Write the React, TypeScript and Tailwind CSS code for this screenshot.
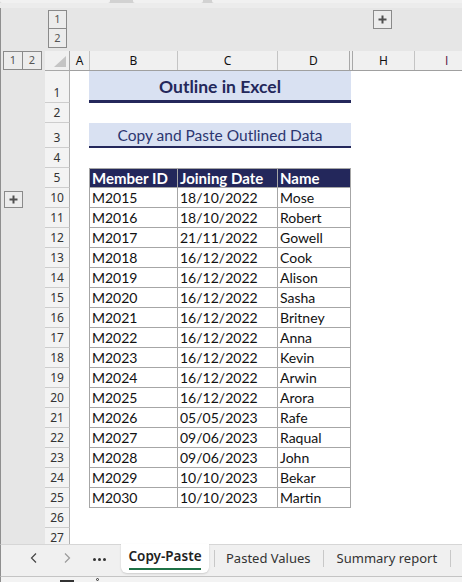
import React from 'react';

const data = [
  ['M2015', '18/10/2022', 'Mose'],
  ['M2016', '18/10/2022', 'Robert'],
  ['M2017', '21/11/2022', 'Gowell'],
  ['M2018', '16/12/2022', 'Cook'],
  ['M2019', '16/12/2022', 'Alison'],
  ['M2020', '16/12/2022', 'Sasha'],
  ['M2021', '16/12/2022', 'Britney'],
  ['M2022', '16/12/2022', 'Anna'],
  ['M2023', '16/12/2022', 'Kevin'],
  ['M2024', '16/12/2022', 'Arwin'],
  ['M2025', '16/12/2022', 'Arora'],
  ['M2026', '05/05/2023', 'Rafe'],
  ['M2027', '09/06/2023', 'Raqual'],
  ['M2028', '09/06/2023', 'John'],
  ['M2029', '10/10/2023', 'Bekar'],
  ['M2030', '10/10/2023', 'Martin'],
];

type Row = { n: string; h: string; kind: 'blank' | 'title' | 'sub' | 'head' | 'data'; cells?: string[] };

const rows: Row[] = [
  { n: '1', h: 'h-[32px]', kind: 'title' },
  { n: '2', h: 'h-[20px]', kind: 'blank' },
  { n: '3', h: 'h-[25px]', kind: 'sub' },
  { n: '4', h: 'h-[20px]', kind: 'blank' },
  { n: '5', h: 'h-[20px]', kind: 'head', cells: ['Member ID', 'Joining Date', 'Name'] },
  ...data.map((d, i) => ({ n: String(10 + i), h: 'h-[20px]', kind: 'data' as const, cells: d })),
  { n: '26', h: 'h-[20px]', kind: 'blank' },
  { n: '27', h: 'h-[20px]', kind: 'blank' },
];

const ui = "font-['Noto_Sans','Open_Sans',sans-serif]";
const cellFont = "font-['Lato','Open_Sans',sans-serif]";

function Plus() {
  return (
    <svg width="9" height="9" viewBox="0 0 9 9">
      <rect x="3.5" y="0.5" width="2" height="8" fill="#505050" />
      <rect x="0.5" y="3.5" width="8" height="2" fill="#505050" />
    </svg>
  );
}

function LevelBox({ label, cls }: { label: string; cls: string }) {
  return (
    <div className={`flex items-center justify-center border-[#8a8a8a] bg-[#ececec] text-[11px] text-[#555] ${cls}`}>
      {label}
    </div>
  );
}

function TableCells({ row }: { row: Row }) {
  const head = row.kind === 'head';
  const base = `flex items-center pl-[2px] whitespace-nowrap border-l border-b border-[#a6a6a6] ${cellFont} ${
    head ? 'bg-[#23275b] text-white font-bold text-[15px] border-t' : 'text-[14px] text-[#111]'
  }`;
  const c = row.cells || [];
  return (
    <>
      <div className={`w-[88px] ${base}`}>{c[0]}</div>
      <div className={`w-[100px] ${base}`}>{c[1]}</div>
      <div className={`w-[74px] border-r ${base}`}>{c[2]}</div>
    </>
  );
}

function Cells({ row }: { row: Row }) {
  if (row.kind === 'title') {
    return (
      <div className={`w-[262px] flex items-center justify-center pt-[3px] whitespace-nowrap bg-[#d9e1f2] border-b-[3px] border-[#24285b] ${cellFont} font-bold text-[17.5px] text-[#24285b]`}>
        Outline in Excel
      </div>
    );
  }
  if (row.kind === 'sub') {
    return (
      <div className={`w-[262px] flex items-center justify-center pt-[2px] whitespace-nowrap bg-[#d9e1f2] border-b-2 border-[#24285b] ${cellFont} text-[15.5px] text-[#2c3670]`}>
        Copy and Paste Outlined Data
      </div>
    );
  }
  if (row.kind === 'head' || row.kind === 'data') return <TableCells row={row} />;
  return null;
}

export default function App() {
  return (
    <div className={`w-[462px] h-[582px] overflow-hidden flex flex-col bg-white ${ui}`}>
      {/* strip under the formula bar */}
      <div className="h-[3px] flex bg-[#d2d2d2]">
        <div className="w-[110px] bg-[#f1f1f1] rounded-b-[2px]" />
        <div className="w-[70px] ml-[23px] bg-[#f1f1f1] rounded-b-[2px]" />
        <div className="flex-1 ml-[9px] bg-[#f1f1f1] rounded-bl-[2px]" />
      </div>
      <div className="h-[5px] bg-[#ececec]" />

      <div className="flex-1 flex flex-col border-l border-[#8f8f8f] overflow-hidden">
        {/* column outline bar */}
        <div className="h-[43px] flex items-start bg-[#e6e6e6] pl-[47px] pt-[2px]">
          <div className="flex flex-col">
            <LevelBox label="1" cls="w-[19px] h-[19px] border" />
            <LevelBox label="2" cls="w-[19px] h-[19px] border-x border-b" />
          </div>
          <div className="ml-[306px] w-[19px] h-[19px] border border-[#8a8a8a] bg-[#ececec] flex items-center justify-center">
            <Plus />
          </div>
        </div>

        {/* column headers */}
        <div className="h-[20px] flex">
          <div className="w-[44px] bg-[#e6e6e6] flex items-start pl-[2px]">
            <LevelBox label="1" cls="w-[20px] h-[19px] border" />
            <LevelBox label="2" cls="w-[19px] h-[19px] border-y border-r" />
          </div>
          <div className="w-[25px] bg-[#f0f0f0] border-r border-b border-[#a8a8a8] relative">
            <svg className="absolute right-[3px] bottom-[3px]" width="12" height="11" viewBox="0 0 12 11">
              <polygon points="12,0 12,11 0,11" fill="#c4c4c4" />
            </svg>
          </div>
          <div className="flex-1 flex bg-[#f0f0f0] border-b border-[#a0a0a0] text-[12px] text-[#111]">
            <div className="w-[19px] flex items-center justify-center">A</div>
            <div className="w-[88px] flex items-center justify-center border-l border-[#c4c4c4]">B</div>
            <div className="w-[100px] flex items-center justify-center border-l border-[#c4c4c4]">C</div>
            <div className="w-[72px] flex items-center justify-center border-l border-[#c4c4c4]">D</div>
            <div className="w-[4px] border-x border-[#a8a8a8]" />
            <div className="w-[61px] flex items-center justify-center">H</div>
            <div className="flex-1 flex items-center pl-[30px] border-l border-[#c4c4c4] font-['Open_Sans',sans-serif] text-[#55103f]">I</div>
          </div>
        </div>

        {/* sheet rows */}
        <div className="flex-1 overflow-hidden">
          {rows.map((row) => (
            <div key={row.n} className={`flex ${row.h}`}>
              <div className="w-[44px] bg-[#e6e6e6] pl-[3px]">
                {row.n === '10' && (
                  <div className="mt-[3px] w-[19px] h-[17px] border border-[#8a8a8a] bg-[#ececec] flex items-center justify-center">
                    <Plus />
                  </div>
                )}
              </div>
              <div className="w-[25px] flex items-end justify-center pb-[3px] bg-[#f3f3f3] border-r border-b border-r-[#b0b0b0] border-b-[#cdcdcd] text-[12px] leading-none text-[#333]">
                {row.n}
              </div>
              <div className="w-[19px]" />
              <Cells row={row} />
            </div>
          ))}
        </div>
      </div>

      {/* sheet tabs */}
      <div className="h-[32px] flex items-start whitespace-nowrap bg-[#f0f0f0] border-t border-[#d6d6d6] border-l border-l-[#8f8f8f]">
        <div className="h-[26px] flex items-center ml-[28px] shrink-0">
          <svg width="10" height="12" viewBox="0 0 10 12">
            <path d="M7 1.5 L2.5 6 L7 10.5" fill="none" stroke="#444" strokeWidth="1.2" />
          </svg>
        </div>
        <div className="h-[26px] flex items-center ml-[23px] shrink-0">
          <svg width="10" height="12" viewBox="0 0 10 12">
            <path d="M3 1.5 L7.5 6 L3 10.5" fill="none" stroke="#9a9a9a" strokeWidth="1.2" />
          </svg>
        </div>
        <div className="h-[28px] flex items-center ml-[21px] gap-[2px] shrink-0">
          <span className="w-[3px] h-[3px] bg-[#333] rounded-full" />
          <span className="w-[3px] h-[3px] bg-[#333] rounded-full" />
          <span className="w-[3px] h-[3px] bg-[#333] rounded-full" />
        </div>
        <div className="ml-[15px] -mt-px w-[88px] h-[29px] shrink-0 bg-white rounded-b-[6px] shadow-[0_1px_2px_rgba(0,0,0,0.15)] flex flex-col items-center pt-[2px]">
          <span className="text-[13.5px] font-semibold text-[#222] leading-[20px]">Copy-Paste</span>
          <span className="w-[72px] h-[2px] bg-[#1e7145] mt-[2px]" />
        </div>
        <div className="ml-[5px] mt-[5px] w-px h-[17px] shrink-0 bg-[#c8c8c8]" />
        <span className="ml-[11px] mt-[3px] shrink-0 text-[13px] text-[#333] leading-[20px]">Pasted Values</span>
        <div className="ml-[12px] mt-[5px] w-px h-[17px] shrink-0 bg-[#c8c8c8]" />
        <span className="ml-[13px] mt-[3px] shrink-0 text-[13px] text-[#333] leading-[20px]">Summary report</span>
        <div className="ml-[13px] mt-[5px] w-px h-[17px] shrink-0 bg-[#c8c8c8]" />
      </div>

      {/* status bar edge */}
      <div className="h-[6px] flex bg-[#f3f3f3] border-t border-[#c4c4c4] border-l border-l-[#8f8f8f]">
        <div className="ml-[59px] mt-[3px] w-[14px] h-[2px] bg-[#333]" />
        <div className="ml-[22px] mt-[1px] w-[3px] h-[3px] border border-[#333] rounded-full" />
      </div>
    </div>
  );
}
